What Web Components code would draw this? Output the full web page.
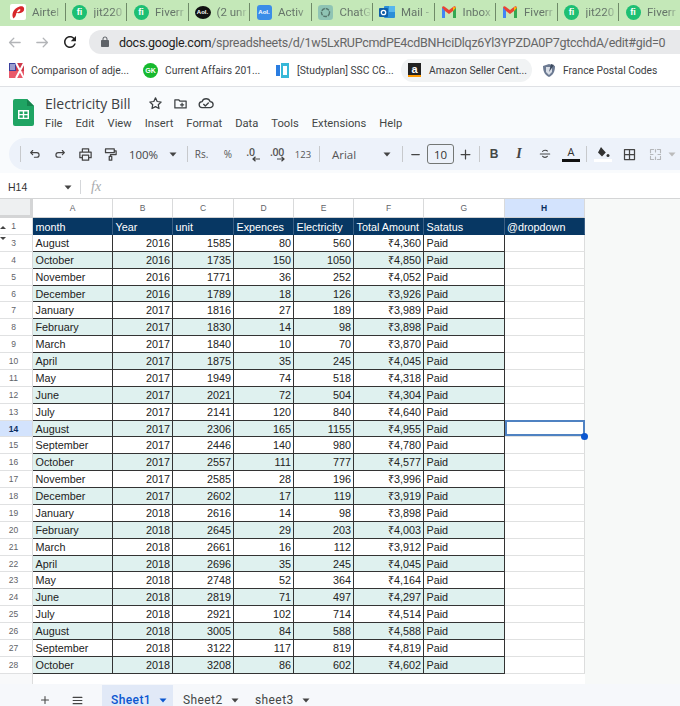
<!DOCTYPE html>
<html><head><meta charset="utf-8"><style>
html,body{margin:0;height:100%;overflow:hidden;background:#fff}
body{display:flex;flex-direction:column;width:680px;height:706px;font-family:"Open Sans","Liberation Sans",sans-serif}
</style></head><body>
<chrome-tabs></chrome-tabs>
<address-bar></address-bar>
<bookmark-bar></bookmark-bar>
<sheet-header></sheet-header>
<sheet-toolbar></sheet-toolbar>
<formula-bar></formula-bar>
<sheet-grid></sheet-grid>
<sheet-tabs></sheet-tabs>
<script>
const st=(d,w=1.6,c='currentColor',s=16)=>`<svg width="${s}" height="${s}" viewBox="0 0 24 24" fill="none" stroke="${c}" stroke-width="${w}" stroke-linecap="round" stroke-linejoin="round"><path d="${d}"/></svg>`;
const fl=(d,c='currentColor',s=16)=>`<svg width="${s}" height="${s}" viewBox="0 0 24 24" fill="${c}"><path d="${d}"/></svg>`;
const caret=(c='#444')=>`<svg width="8" height="5" viewBox="0 0 8 5"><path d="M0.5 0.5h7L4 4.5z" fill="${c}"/></svg>`;
class Base extends HTMLElement{
  constructor(){super();this.attachShadow({mode:'open'}).innerHTML=`<style>${this.css()}</style>${this.html()}`;}
  css(){return ''} html(){return ''}
}
const tabIcons={
 airtel:`<svg width="16" height="16" viewBox="0 0 16 16"><rect width="16" height="16" rx="2" fill="#fff"/><path d="M3.500 14.500C1 11 3 4.500 9.500 2.500c3.800-1 5.500 1.500 4.300 4.300C12.500 9.300 9 9.700 5.800 8.800 8.500 8.500 10.800 7.200 10.300 5.600 9.500 4.500 7 6.200 6.300 9.500 6 11.500 5 13.500 3.500 14.500z" fill="#d8262c"/></svg>`,
 fi:`<span class="fi">fi</span>`,
 aol:`<span class="aol">Aol.</span>`,
 aolb:`<span class="aolb">Aol.</span>`,
 gpt:`<svg width="15" height="15" viewBox="0 0 16 16"><rect width="16" height="16" rx="3.500" fill="#8fc4b4"/><circle cx="8" cy="8" r="4.300" fill="none" stroke="#55766c" stroke-width="1.500" stroke-dasharray="4 1"/></svg>`,
 outlook:`<svg width="16" height="16" viewBox="0 0 16 16"><rect x="5" y="2" width="11" height="12" rx="1" fill="#2a8fd8"/><rect x="10" y="2" width="6" height="6" fill="#56b6ee"/><rect x="0" y="4" width="9" height="9" rx="1" fill="#0f5fa8"/><circle cx="4.500" cy="8.500" r="2.200" fill="none" stroke="#fff" stroke-width="1.300"/></svg>`,
 gmail:`<svg width="16" height="14" viewBox="0 0 16 14"><path d="M1 13V2.500L4 4v9z" fill="#4285f4"/><path d="M15 13V2.500L12 4v9z" fill="#34a853"/><path d="M1 2.500C1.500 1 3 1 4 2l4 3 4-3c1-1 2.500-1 3 .5L12 6 8 9 4 6z" fill="#ea4335"/><path d="M12 2l3 .5L12 6z" fill="#fbbc04"/></svg>`};
class ChromeTabs extends Base{
 css(){return `:host{display:flex;height:26px;background:#c4e8b8;padding-left:4px;box-sizing:border-box;flex:none;overflow:hidden;font:11.500px Roboto,"Liberation Sans",sans-serif;color:#66756a}
 .t{flex:none;width:61.500px;box-sizing:border-box;display:flex;align-items:center;gap:6px;padding:0 1px 2px 6px;position:relative}
 .t::after{content:"";position:absolute;right:0;top:3px;bottom:5px;width:1px;background:#6f8a68}
 .t:last-child::after{display:none}
 .i{flex:none;width:16px;height:16px;display:flex;align-items:center;justify-content:center}
 .l{white-space:nowrap;flex:1;-webkit-mask-image:linear-gradient(90deg,#000 60%,transparent 100%);mask-image:linear-gradient(90deg,#000 60%,transparent 100%)}
 .fi{width:15px;height:15px;border-radius:50%;background:#1dbf73;color:#fff;font:bold 9px "Liberation Sans",sans-serif;display:flex;align-items:center;justify-content:center}
 .aol{width:16px;height:13px;border-radius:50%;background:#111;color:#fff;font:bold 6px "Liberation Sans",sans-serif;display:flex;align-items:center;justify-content:center}
 .aolb{width:15px;height:15px;border-radius:3px;background:#3b8de8;color:#fff;font:bold 6px "Liberation Sans",sans-serif;display:flex;align-items:center;justify-content:center}`}
 html(){return [['airtel','Airtel'],['fi','jit220'],['fi','Fiverr'],['aol','(2 unr'],['aolb','Activ'],['gpt','ChatG'],['outlook','Mail -'],['gmail','Inbox'],['gmail','Fiverr'],['fi','jit220'],['fi','Fiverr']].map(([i,l])=>`<div class="t"><span class="i">${tabIcons[i]}</span><span class="l">${l}</span></div>`).join('')}
}
class AddressBar extends Base{
 css(){return `:host{display:flex;align-items:center;height:33px;flex:none;background:#fff;box-sizing:border-box;padding:4px 0 5px 0;color:#5f6368}
 .n{flex:none;width:28px;display:flex;justify-content:center}
 .n:first-child{margin-left:2px}
 .p{flex:1;min-width:0;height:24px;margin-left:5px;border-radius:12px 0 0 12px;background:#e8e9eb;display:flex;align-items:center;padding-left:10px;gap:8px;font:12.500px Roboto,"Liberation Sans",sans-serif;letter-spacing:-.28px;color:#666;white-space:nowrap}
 .p svg{flex:none}
 b{font-weight:400;color:#222}`}
 html(){const ar='M20 12H5M11 6l-6 6 6 6';const fw='M4 12h15M13 6l6 6-6 6';
 return `<span class="n" style="color:#b3b5b8">${st(ar,1.8,'currentColor',17)}</span><span class="n" style="color:#b3b5b8">${st(fw,1.8,'currentColor',17)}</span><span class="n" style="color:#222">${fl('M17.650 6.350C16.200 4.900 14.210 4 12 4c-4.420 0-7.990 3.580-7.990 8s3.570 8 7.990 8c3.730 0 6.840-2.550 7.730-6h-2.080c-.820 2.330-3.040 4-5.650 4-3.310 0-6-2.690-6-6s2.690-6 6-6c1.660 0 3.140.690 4.220 1.780L13 11h7V4l-2.350 2.350z','currentColor',18)}</span>
 <div class="p">${fl('M18 8h-1V6c0-2.760-2.240-5-5-5S7 3.240 7 6v2H6c-1.100 0-2 .900-2 2v10c0 1.100.900 2 2 2h12c1.100 0 2-.900 2-2V10c0-1.100-.900-2-2-2zM9 6c0-1.660 1.340-3 3-3s3 1.340 3 3v2H9V6z','#5f6368',12)}<span><b>docs.google.com</b>/spreadsheets/d/1w5LxRUPcmdPE4cdBNHciDlqz6Yl3YPZDA0P7gtcchdA/edit#gid=0</span></div>`}
}
class BookmarkBar extends Base{
 css(){return `:host{display:flex;align-items:center;height:28px;flex:none;background:#fff;border-bottom:1px solid #dfe1e5;box-sizing:border-box;padding:0 0 5px 3px;font:10.300px Roboto,"Liberation Sans",sans-serif;color:#3c4043;overflow:hidden;white-space:nowrap}
 .b{flex:none;display:flex;align-items:center;gap:7px;height:24px;padding:0 6px;box-sizing:border-box}
 .hov{background:#f1f3f4;border-radius:12px}
 .i{flex:none;width:15px;height:15px;display:flex;align-items:center;justify-content:center}
 .gk{width:15px;height:15px;border-radius:50%;background:#17b92e;color:#fff;font:bold 7px "Liberation Sans",sans-serif;display:flex;align-items:center;justify-content:center}
 .a{width:13px;height:14px;background:#222;color:#fff;font:bold 11px "Liberation Sans",sans-serif;display:flex;align-items:center;justify-content:center;border-bottom:2px solid #f90;box-sizing:border-box}`}
 html(){const ic={
 flag:`<svg width="15" height="15" viewBox="0 0 15 15"><rect width="15" height="15" fill="#cf3a4a"/><path d="M0 8h15v7H0z" fill="#e9596a"/><path d="M0 0h7v8H0z" fill="#3b3f9e"/><path d="M7 0l8 15M15 0L7 15" stroke="#fff" stroke-width="2"/><path d="M1 2h5M1 4h5M1 6h5" stroke="#fff"/></svg>`,
 gk:`<span class="gk">GK</span>`,
 doc:`<svg width="13" height="15" viewBox="0 0 13 15"><path d="M0 2h4v11H0z" fill="#2a7de1"/><path d="M5 0h8v15H5z" fill="#36b8d8"/><path d="M7 3h4v9H7z" fill="#fff"/></svg>`,
 a:`<span class="a">a</span>`,
 sh:`<svg width="15" height="15" viewBox="0 0 15 15"><path d="M2 3l6-2 6 2c0 6-2 9-6 11C4 12 2 9 2 3z" fill="#6c7a92"/><path d="M5 4h6v5l-3 3-3-3z" fill="#d8dde6"/><path d="M10 1l3 1-5 7z" fill="#3c4a60"/></svg>`};
 return [['flag','Comparison of adje...',134],['gk','Current Affairs 201...',132],['doc','[Studyplan] SSC CG...',132],['a','Amazon Seller Cent...',131,1,3],['sh','France Postal Codes',125]].map(([i,l,w,h,m])=>`<div class="b${h?' hov':''}" style="width:${w}px;margin-right:${m||0}px"><span class="i">${ic[i]}</span><span>${l}</span></div>`).join('')}
}
class SheetHeader extends Base{
 css(){return `:host{display:flex;height:51px;flex:none;background:#f9fbfd;box-sizing:border-box;padding:12px 0 0 13px;gap:11px;font-family:Roboto,"Liberation Sans",sans-serif;color:#444746}
 .c{display:flex;flex-direction:column;margin-top:-6px}
 .r{display:flex;align-items:center;height:20px}
 .t{font:14px "Open Sans","Liberation Sans",sans-serif;color:#3c4043;margin-right:12px}
 .r i{display:flex;width:25.500px;justify-content:center}
 .m{display:flex;gap:13px;font-size:11.200px;height:20px;align-items:center}`}
 html(){return `<svg width="21" height="27" viewBox="0 0 21 27"><path d="M2 0h12l7 7v18a2 2 0 0 1-2 2H2a2 2 0 0 1-2-2V2a2 2 0 0 1 2-2z" fill="#1fa463"/><path d="M14 0l7 7h-7z" fill="#16834d"/><path d="M5 11h11v9H5zM6.500 12.500v2.500h3.300v-2.500zM11.200 12.500v2.500h3.300v-2.500zM6.500 16.300v2.400h3.300v-2.400zM11.200 16.300v2.400h3.300v-2.400z" fill="#fff" fill-rule="evenodd"/></svg>
 <div class="c"><div class="r"><span class="t">Electricity Bill</span><i>${st('M12 3l2.700 5.800 6.300.800-4.600 4.300 1.200 6.200L12 17l-5.600 3.100 1.200-6.200L3 9.600l6.300-.800z',2,'#3c4043',15)}</i><i>${st('M3 6h6l2 2h10v11H3zM12 14h5M14.500 11.500v5',2,'#3c4043',15)}</i><i>${st('M6.500 19a4.500 4.500 0 0 1-.5-9 6.500 6.500 0 0 1 12.300 0 4.500 4.500 0 0 1-.3 9zM8.500 14l2.500 2.500 4.500-4.500',2,'#3c4043',16)}</i></div>
 <div class="m">${'File Edit View Insert Format Data Tools Extensions Help'.split(' ').map(x=>`<span>${x}</span>`).join('')}</div></div>`}
}
class SheetToolbar extends Base{
 css(){return `:host{display:flex;flex:none;height:38px;background:linear-gradient(#f9fbfd 0 35px,#fff 35px);padding:0;font:11px "Open Sans","Liberation Sans",sans-serif;color:#444746;box-sizing:border-box}
 .wrap{flex:1;display:flex;height:32px;align-items:center;margin-left:9px;border-radius:16px 0 0 16px;background:#edf2fa;white-space:nowrap;overflow:hidden}
 .x{flex:none;display:flex;align-items:center;justify-content:center;height:24px;box-sizing:border-box}
 .d{flex:none;width:1px;height:16px;background:#c7c9cc}
 .sm{font-size:10px;color:#555}
 .box{border:1px solid #747775;border-radius:3px;height:20px;font-size:11.500px;color:#333}
 .bd{font:bold 12px "Liberation Sans",sans-serif}
 .it{font:italic bold 14px "Liberation Serif",serif;color:#444}
 .under{display:flex;flex-direction:column;align-items:center;line-height:10px;font-size:11px;color:#333}
 .under s{display:block;text-decoration:none;width:18px;height:3px;background:#111;margin-top:2px}
 .sub{font-size:10.500px;font-weight:600;letter-spacing:-.3px;color:#555;position:relative;top:-2px}
 .wrap svg{flex:none}`}
 html(){
 const x=(w,c,k='')=>`<span class="x ${k}" style="width:${w}px">${c}</span>`;
 const d=`<span class="d"></span>`;
 return `<div class="wrap">
 ${x(11,'')}${d}${x(1.5,'')}
 ${x(25,st('M8 6L4.500 9.500 8 13M4.500 9.500H15a4 4 0 0 1 0 8h-4',2,'#444',14))}
 ${x(25,st('M16 6l3.500 3.500L16 13M19.500 9.500H9a4 4 0 0 0 0 8h4',2,'#444',14))}
 ${x(25,st('M7 8V3h10v5M7 17H3V8h18v9h-4M7 13h10v8H7z',2,'#444',15))}
 ${x(25,st('M4 3h14v6H4zM18 6h3v6h-9v3M10 15h4v6h-4z',2,'#444',15))}
 ${x(42,'<span style="font-size:11.500px;color:#444">100%</span>')}${x(16,caret())}${x(6,'')}${d}
 ${x(28,'<span class="sm">Rs.</span>')}${x(25,'<span class="sm">%</span>')}
 ${x(20,'<span class="sub">.0<svg width="9" height="6" viewBox="0 0 9 6" style="position:absolute;left:6px;top:11px"><path d="M8 3H1M3.500 .8L1 3l2.500 2.200" fill="none" stroke="#444" stroke-width="1.200"/></svg></span>')}
 ${x(33,'<span class="sub">.00<svg width="9" height="6" viewBox="0 0 9 6" style="position:absolute;left:6px;top:11px"><path d="M1 3h7M5.500 .8L8 3 5.500 5.200" fill="none" stroke="#444" stroke-width="1.200"/></svg></span>')}
 ${x(19,'<span class="sm" style="font-size:9.500px">123</span>')}${x(6.5,'')}${d}
 ${x(48,'<span style="font-size:11.500px;color:#555">Arial</span>')}${x(15,'')}${x(8,caret())}${x(11,'')}${d}
 ${x(24,st('M6 12h12',2,'#444',15))}
 ${x(27,'10','box')}
 ${x(22,st('M5 12h14M12 5v14',2,'#444',15))}${x(3,'')}${d}
 ${x(28,'<span class="bd">B</span>')}
 ${x(22,'<span class="it">I</span>')}
 ${x(30,st('M4 12h16M16 7c-1-2-7-2-8 .5M8 16c1 2.500 7 2.500 8 0',2,'#444',14))}
 ${x(22,'<span class="under">A<s></s></span>')}${x(4,'')}${d}
 ${x(32,'<span class="under"><svg width="13" height="11" viewBox="0 0 13 11"><path d="M4 0l1.200 1.500L8.800 5.500 5 9.500 1 5.500z" fill="#333"/><circle cx="11" cy="8.500" r="1.500" fill="#333"/></svg><s style="background:#fff;margin-top:1px"></s></span>')}
 ${x(20,st('M4 4h16v16H4zM12 4v16M4 12h16',2,'#444',15))}
 ${x(4,'')}${x(24,st('M4 9V4h5M15 4h5v5M20 15v5h-5M9 20H4v-5M12 4v4M12 16v4M4 12h4M16 12h4',1.800,'#b5b7ba',15))}
 ${x(10,caret('#bbb'))}
 </div>`}
}
class FormulaBar extends Base{
 css(){return `:host{display:flex;align-items:center;height:23px;flex:none;background:#fff;border-bottom:1px solid #d4d5d6;box-sizing:border-box;font:10.500px "Liberation Sans",sans-serif;color:#333}
 .n{width:64px;padding-left:8px;box-sizing:border-box}
 .s{width:1px;height:14px;background:#d5d7da;margin:0 10px 0 8px}
 i{font:italic 14px "Liberation Serif",serif;color:#a8aaad}`}
 html(){return `<span class="n">H14</span>${caret()}<span class="s"></span><i>fx</i>`}
}
const DATA=`3 August 2016 1585 80 560 4,360
4 October 2016 1735 150 1050 4,850
5 November 2016 1771 36 252 4,052
6 December 2016 1789 18 126 3,926
7 January 2017 1816 27 189 3,989
8 February 2017 1830 14 98 3,898
9 March 2017 1840 10 70 3,870
10 April 2017 1875 35 245 4,045
11 May 2017 1949 74 518 4,318
12 June 2017 2021 72 504 4,304
13 July 2017 2141 120 840 4,640
14 August 2017 2306 165 1155 4,955
15 September 2017 2446 140 980 4,780
16 October 2017 2557 111 777 4,577
17 November 2017 2585 28 196 3,996
18 December 2017 2602 17 119 3,919
19 January 2018 2616 14 98 3,898
20 February 2018 2645 29 203 4,003
21 March 2018 2661 16 112 3,912
22 April 2018 2696 35 245 4,045
23 May 2018 2748 52 364 4,164
24 June 2018 2819 71 497 4,297
25 July 2018 2921 102 714 4,514
26 August 2018 3005 84 588 4,588
27 September 2018 3122 117 819 4,819
28 October 2018 3208 86 602 4,602`.split('\n').map(l=>l.split(' '));
class SheetGrid extends Base{
 css(){return `:host{display:grid;flex:none;height:485px;grid-template-columns:33px 80px 60px 61px 60px 60px 70px 80.500px 80px 95.500px;grid-template-rows:19px repeat(27,16.890px) 10px;background:#f7f9f8;font:10.800px "Liberation Sans",sans-serif;color:#222;position:relative}
 div{box-sizing:border-box;white-space:nowrap;overflow:hidden;line-height:17.500px}
 .ch{background:#fff;font-size:8.500px;color:#5f6368;text-align:center;line-height:18px;border-right:1px solid #d9dadb;border-bottom:1px solid #d0d1d2}
 .corner{background:#eef0f1;border-right:3px solid #d4d5d6;border-bottom:3px solid #d4d5d6}
 .ch.on{background:#d3e3fd;color:#0b2e60;font-weight:bold}
 .rn{background:#fff;font-size:8.500px;color:#5f6368;text-align:center;padding-right:5px;border-right:1px solid #d9dadb;border-bottom:1px solid #e0e1e2;position:relative;overflow:visible}
 .rn.on{background:#d3e3fd;color:#0b2e60;font-weight:bold}
 .arr{position:absolute;left:0;width:0;height:0;border-left:3px solid transparent;border-right:3px solid transparent}
 .c{padding:0 2px 0 2.500px;border-right:1px solid #333;border-bottom:1px solid #333;background:#fff}
 .c.alt{background:#dff1ef}
 .c.r{text-align:right}
 .hd{background:#073763;color:#fff;border-right:1px solid #3a5f85;border-bottom:1px solid #073763;line-height:18px}
 .h{background:#fff;border-right:1px solid #dcdddd;border-bottom:1px solid #e0e1e1}
 .e{background:#f7f9f8}
 .g{background:#f8f9fa;border-right:1px solid #dcdddd}
 .b{background:#fff}
 .sel{position:relative;overflow:visible;z-index:2}
 .sel::before{content:"";position:absolute;left:0;right:-1px;top:-1px;bottom:0;border:2px solid #4f82c2;box-sizing:border-box}
 .sel::after{content:"";position:absolute;right:-4px;bottom:-4px;width:7px;height:7px;border-radius:50%;background:#0b57d0}`}
 html(){
 let h=`<div class="ch corner"></div>`+'ABCDEFGH'.split('').map(l=>`<div class="ch${l=='H'?' on':''}">${l}</div>`).join('')+`<div class="e"></div>`;
 h+=`<div class="rn">1<span class="arr" style="top:8px;border-bottom:3px solid #444"></span></div>`;
 ['month','Year','unit','Expences','Electricity','Total Amount','Satatus','@dropdown'].forEach(t=>h+=`<div class="c hd">${t}</div>`);
 h+=`<div class="e"></div>`;
 DATA.forEach(([n,m,y,u,e,k,a])=>{const alt=+n%2==0?' alt':'';const on=n=='14';
  h+=`<div class="rn${on?' on':''}">${n}${n=='3'?'<span class="arr" style="top:2px;border-top:3px solid #444"></span>':''}</div>`;
  h+=`<div class="c${alt}">${m}</div>`;
  [y,u,e,k,'₹'+a].forEach(v=>h+=`<div class="c r${alt}">${v}</div>`);
  h+=`<div class="c${alt}">Paid</div><div class="h${on?' sel':''}"></div><div class="e"></div>`;});
 h+=`<div class="g"></div><div class="b" style="grid-column:2/10"></div><div class="e"></div>`;
 return h}
}
class SheetTabs extends Base{
 css(){return `:host{display:flex;flex:1;min-height:0;background:#f6f8fb;align-items:stretch;font:12px Roboto,"Liberation Sans",sans-serif;color:#444746;letter-spacing:.4px;overflow:hidden;padding-top:1px;box-sizing:border-box}
 .i{flex:none;display:flex;align-items:center;justify-content:center;padding-top:9px}
 .t{flex:none;display:flex;align-items:center;gap:8px;padding:9px 0 0 10px;box-sizing:border-box}
 .a{background:#e1e9f7;color:#0b57d0;font-weight:500;padding-left:9px}`}
 html(){return `<span class="i" style="width:34px;margin-left:28px">${st('M12 6v12M6 12h12',1.800,'#444',14)}</span><span class="i" style="width:30px">${st('M5 7h14M5 12h14M5 17h14',1.800,'#444',15)}</span><span style="width:10px"></span>
 <div class="t a" style="width:71px">Sheet1 ${caret('#0b57d0')}</div><div class="t" style="width:72px">Sheet2 ${caret()}</div><div class="t" style="width:72px">sheet3 ${caret()}</div>`}
}
customElements.define('chrome-tabs',ChromeTabs);
customElements.define('address-bar',AddressBar);
customElements.define('bookmark-bar',BookmarkBar);
customElements.define('sheet-header',SheetHeader);
customElements.define('sheet-toolbar',SheetToolbar);
customElements.define('formula-bar',FormulaBar);
customElements.define('sheet-grid',SheetGrid);
customElements.define('sheet-tabs',SheetTabs);
</script>
</body></html>
